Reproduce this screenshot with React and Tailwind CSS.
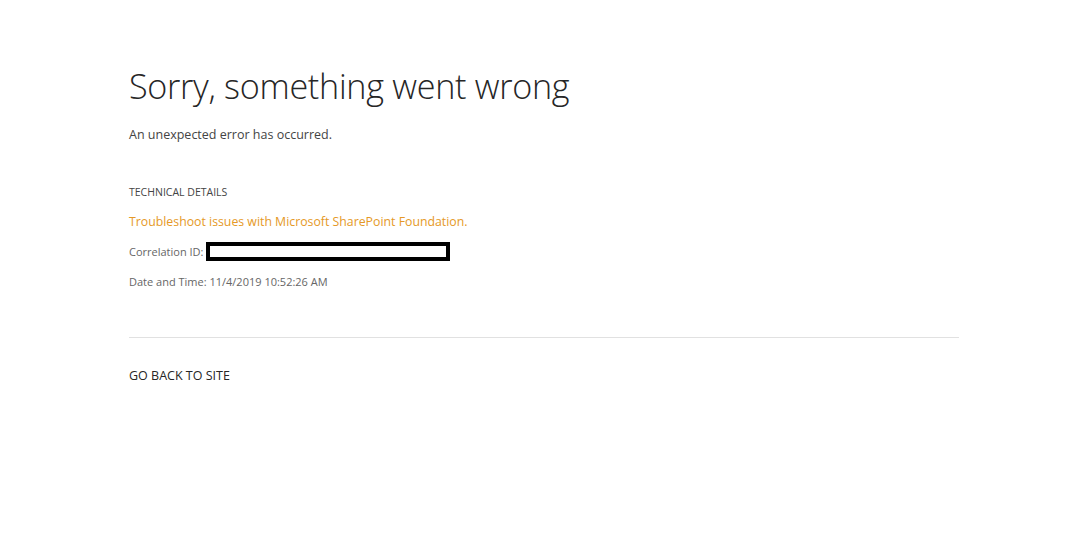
export default function App() {
  return (
    <div className="min-h-screen bg-white" style={{ fontFamily: '"Open Sans", "Noto Sans", sans-serif' }}>
      <div className="pl-[129px] pt-[62px] w-[959px]">
        <h1 className="text-[34.2px] leading-[48px] font-light text-[#262626] tracking-[-0.3px]">
          Sorry, something went wrong
        </h1>
        <p className="mt-[16px] text-[12.5px] leading-[18px] text-[#444]">An unexpected error has occurred.</p>

        <div className="mt-[41px] text-[10.5px] leading-[14px] text-[#444] uppercase">Technical Details</div>
        <a className="block mt-[14px] text-[12.3px] leading-[18px] text-[#e59926]">
          Troubleshoot issues with Microsoft SharePoint Foundation.
        </a>
        <div className="mt-[11px] flex items-center text-[11px] leading-[18px] text-[#666]">
          <span>Correlation ID:</span>
          <span className="ml-[3px] w-[244px] h-[19px] border-[4px] border-black bg-white" />
        </div>
        <div className="mt-[12px] text-[11px] leading-[18px] text-[#666]">Date and Time: 11/4/2019 10:52:26 AM</div>

        <div className="mt-[46px] border-t border-[#e1e1e1]" />
        <div className="mt-[29px] text-[12.5px] leading-[18px] text-[#262626]">GO BACK TO SITE</div>
      </div>
    </div>
  )
}
